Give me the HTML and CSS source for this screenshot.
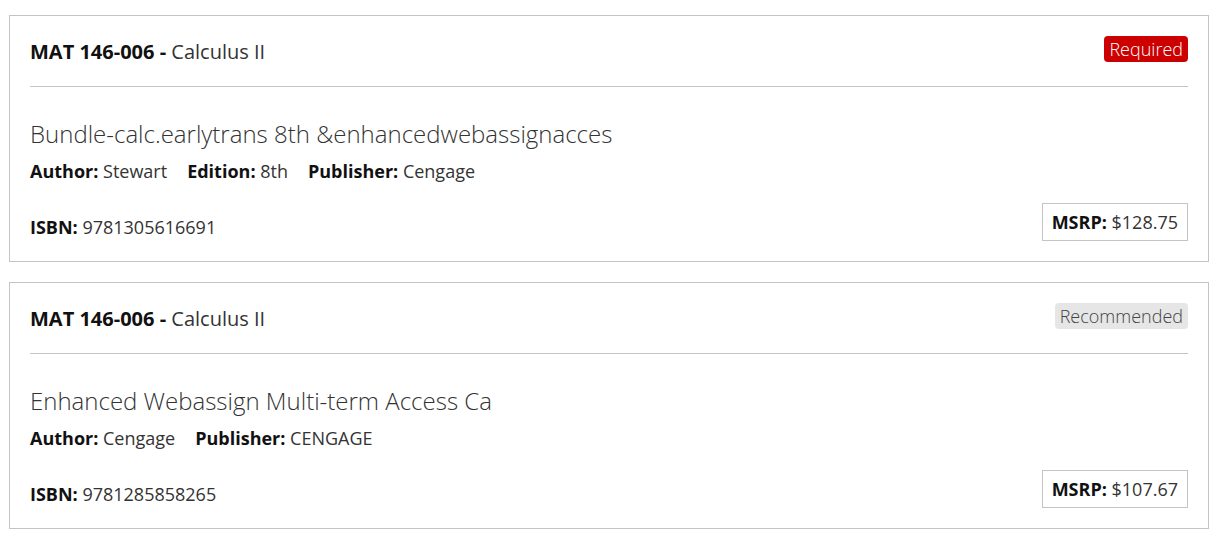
FILE: index.html
```html
<!DOCTYPE html>
<html lang="en">

  <head>
    <meta charset="UTF-8">
    <meta name="viewport" content="width=device-width, initial-scale=1.0">
    <title>Course Materials</title>
    <link rel="stylesheet" href="styles.css">
  </head>

  <body>
    <div class="book-list">

      <div class="book-card">
        <div class="book-header">
          <h3 class="course"><strong>MAT 146-006 -</strong> Calculus II</h3>
          <span class="tag tag-required">Required</span>
        </div>
        <h2 class="book-title">Bundle-calc.earlytrans 8th &amp;enhancedwebassignacces</h2>
        <div class="book-meta">
          <span><strong>Author:</strong> Stewart</span>
          <span><strong>Edition:</strong> 8th</span>
          <span><strong>Publisher:</strong> Cengage</span>
        </div>
        <div class="book-footer">
          <span class="isbn"><strong>ISBN:</strong> 9781305616691</span>
          <span class="msrp"><strong>MSRP:</strong> $128.75</span>
        </div>
      </div>

      <div class="book-card">
        <div class="book-header">
          <h3 class="course"><strong>MAT 146-006 -</strong> Calculus II</h3>
          <span class="tag tag-recommended">Recommended</span>
        </div>
        <h2 class="book-title">Enhanced Webassign Multi-term Access Ca</h2>
        <div class="book-meta">
          <span><strong>Author:</strong> Cengage</span>
          <span><strong>Publisher:</strong> CENGAGE</span>
        </div>
        <div class="book-footer">
          <span class="isbn"><strong>ISBN:</strong> 9781285858265</span>
          <span class="msrp"><strong>MSRP:</strong> $107.67</span>
        </div>
      </div>

    </div>
  </body>

</html>
```

FILE: styles.css
```css
body {
  margin: 0;
  background-color: #fff;
  color: #333;
  font-family: 'Open Sans', sans-serif;
  font-size: 18px;
}

strong {
  font-weight: bold;
  color: #111;
}

.book-list {
  padding: 15px 6px 0 9px;
  display: flex;
  flex-direction: column;
  gap: 20px;
}

.book-card {
  border: 1px solid #c4c4c4;
  padding: 20px;
}

/* course line + tag */
.book-header {
  display: flex;
  justify-content: space-between;
  align-items: flex-start;
  padding-bottom: 18px;
  border-bottom: 1px solid #c4c4c4;
}

.course {
  margin: 0;
  font-size: 20px;
  font-weight: normal;
  line-height: 32px;
}

.tag {
  display: inline-block;
  font-size: 18px;
  font-weight: 300;
  line-height: 26px;
  padding: 0 5px;
  border-radius: 4px;
}

.tag-required {
  background-color: #cc0000;
  color: #fff;
}

.tag-recommended {
  background-color: #e6e6e6;
  color: #444;
}

.book-title {
  margin: 31px 0 0 0;
  font-size: 24px;
  font-weight: 300;
  line-height: 32px;
  color: #333;
}

.book-meta {
  display: flex;
  gap: 20px;
  margin-top: 9px;
  line-height: 24px;
}

.book-footer {
  display: flex;
  justify-content: space-between;
  align-items: flex-end;
  margin-top: 20px;
}

.isbn {
  line-height: 24px;
  margin-bottom: 2px;
}

.msrp {
  border: 1px solid #c4c4c4;
  padding: 6px 9px;
  line-height: 24px;
}
```
